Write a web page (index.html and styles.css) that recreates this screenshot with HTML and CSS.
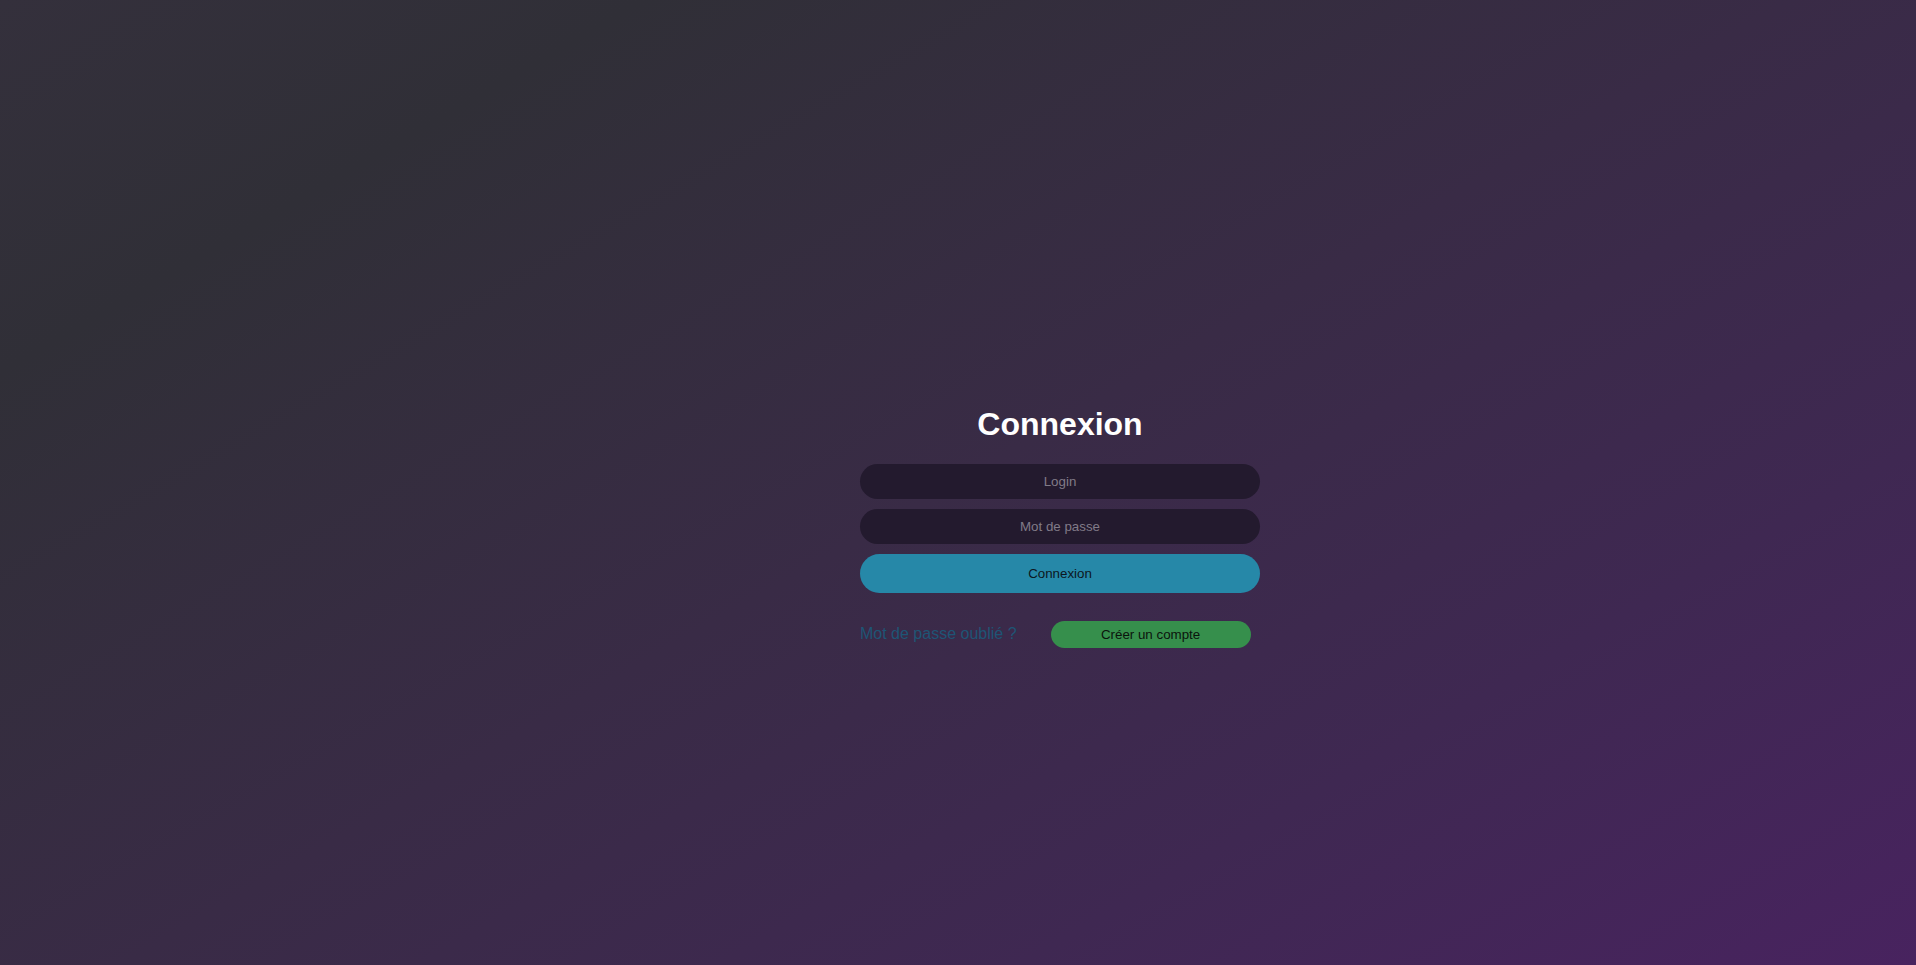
FILE: index.html
```html
<!DOCTYPE html>
<html lang="fr">
<head>
<meta charset="utf-8">
<title>Connexion</title>
<link rel="stylesheet" href="styles.css">
</head>
<body>
<main class="page">
  <form class="login">
    <h1 class="title">Connexion</h1>
    <input class="field" type="text" placeholder="Login">
    <input class="field" type="password" placeholder="Mot de passe">
    <button class="submit" type="button">Connexion</button>
    <div class="extras">
      <a class="forgot" href="#">Mot de passe oublié ?</a>
      <button class="create" type="button">Créer un compte</button>
    </div>
  </form>
</main>
</body>
</html>
```

FILE: styles.css
```css
html, body {
  margin: 0;
  height: 100%;
}
body {
  background: linear-gradient(150deg, #34303c 0%, #302f37 18%, #392b46 50%, #3f2852 75%, #48235f 100%);
  font-family: "Liberation Sans", Arial, sans-serif;
}
.page {
  height: 100%;
  display: flex;
  justify-content: center;
  align-items: flex-start;
}
.login {
  width: 400px;
  margin-left: 204px;
  padding-top: 406px;
  display: flex;
  flex-direction: column;
}
.title {
  margin: 0 0 22px;
  font-size: 32px;
  line-height: 36px;
  font-weight: bold;
  color: #ffffff;
  text-align: center;
}
.field {
  box-sizing: border-box;
  height: 35px;
  width: 400px;
  margin: 0 0 10px;
  border: none;
  border-radius: 18px;
  background: #231a2e;
  color: #d0d0d0;
  text-align: center;
  font-family: "Liberation Sans", Arial, sans-serif;
  font-size: 13.333px;
  outline: none;
}
.field::placeholder {
  color: #817b88;
}
.submit {
  height: 39px;
  width: 400px;
  border: none;
  border-radius: 20px;
  background: #2688a8;
  color: #0c1620;
  font-family: "Liberation Sans", Arial, sans-serif;
  font-size: 13.333px;
  padding: 0;
}
.extras {
  margin-top: 28px;
  display: flex;
  align-items: center;
}
.forgot {
  color: #1e5575;
  text-decoration: none;
  font-size: 16px;
  margin-top: -2px;
}
.create {
  margin-left: 34px;
  width: 200px;
  height: 27px;
  border: none;
  border-radius: 14px;
  background: #368f4c;
  color: #0b140d;
  font-family: "Liberation Sans", Arial, sans-serif;
  font-size: 13.333px;
  padding: 0;
}
```
